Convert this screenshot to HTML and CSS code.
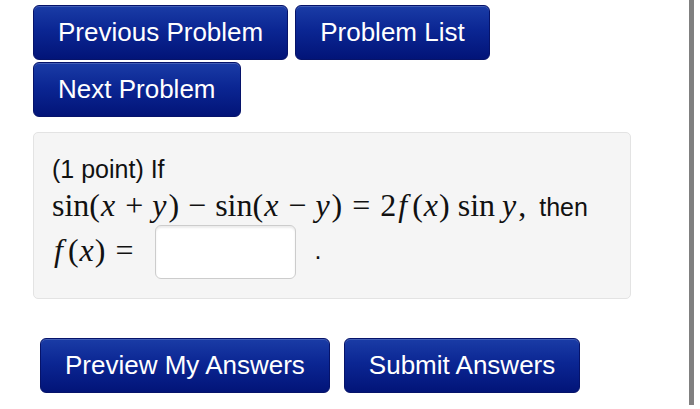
FILE: index.html
```html
<!DOCTYPE html>
<html lang="en">
<head>
<meta charset="utf-8">
<title>Problem</title>
<link rel="stylesheet" href="styles.css">
</head>
<body>
<div class="page">
  <main class="content">
    <nav class="nav">
      <a class="btn">Previous Problem</a>
      <a class="btn">Problem List</a>
      <a class="btn">Next Problem</a>
    </nav>
    <div class="well">
      <div class="line">(1 point) If</div>
      <div class="line eq"><span class="math">sin(<i class="vx">x</i><span class="op">+</span><i class="vy">y</i>)<span class="op">−</span>sin(<i class="vx">x</i><span class="op">−</span><i class="vy">y</i>)<span class="rel">=</span>2<i class="vf">f</i>(<i class="vx">x</i>)<span class="fn">sin</span><i class="vy">y</i>,</span><span class="then">then</span></div>
      <div class="answer"><span class="math"><i class="vf">f</i>(<i class="vx">x</i>)<span class="rel">=</span></span><input class="field" type="text"><span class="dot">.</span></div>
    </div>
    <div class="actions">
      <a class="btn">Preview My Answers</a>
      <a class="btn">Submit Answers</a>
    </div>
  </main>
  <div class="edge"></div>
</div>
</body>
</html>
```
FILE: styles.css
```css
html, body {
  margin: 0;
  padding: 0;
  background: #ffffff;
}
body {
  font-family: "Liberation Sans", Arial, sans-serif;
  color: #111;
}
.page {
  display: flex;
  height: 409px;
}
.content {
  flex: 1;
  padding: 5px 0 0 33px;
}
.edge {
  width: 5px;
  background: #808080;
  margin-right: 6px;
  margin-bottom: 4px;
}
.nav {
  display: flex;
  flex-wrap: wrap;
  column-gap: 7px;
  row-gap: 2px;
  width: 600px;
}
.btn {
  display: inline-block;
  box-sizing: border-box;
  height: 55px;
  padding: 0 24px;
  line-height: 53px;
  font-size: 26px;
  color: #fff;
  border: 1px solid #06136a;
  border-radius: 6px;
  background: linear-gradient(to bottom, #1a3ca6 0%, #0b2693 45%, #021478 100%);
  box-shadow: inset 0 1px 0 rgba(255,255,255,0.18);
  white-space: nowrap;
}
.well {
  box-sizing: border-box;
  width: 598px;
  height: 167px;
  margin-top: 15px;
  padding: 18px 18px 0 18px;
  background: #f5f5f5;
  border: 1px solid #e3e3e3;
  border-radius: 5px;
  font-size: 25px;
}
.line {
  line-height: 36px;
  white-space: nowrap;
}
.math {
  font-family: "Liberation Serif", "Times New Roman", serif;
  font-size: 32px;
}
.math i {
  font-style: italic;
}
.vx {
  padding: 0 1px;
}
.vy {
  padding: 0 2px 0 0;
}
.vf {
  margin: 0 5px 0 2px;
}
.op {
  margin: 0 9px;
}
.rel {
  margin: 0 10px;
}
.fn {
  margin: 0 7px 0 8px;
}
.then {
  margin-left: 13px;
}
.answer {
  display: flex;
  align-items: center;
  line-height: 36px;
}
.answer .math {
  margin-bottom: 5px;
}
.field {
  box-sizing: border-box;
  width: 141px;
  height: 54px;
  margin: 0 0 0 12px;
  padding: 0;
  background: #fff;
  border: 1px solid #cccccc;
  border-radius: 6px;
  box-shadow: inset 0 2px 2px rgba(0,0,0,0.08);
}
.dot {
  margin-left: 18px;
  font-size: 25px;
  position: relative;
  top: -2px;
}
.actions {
  display: flex;
  column-gap: 14px;
  margin-top: 39px;
  padding-left: 7px;
}
```
